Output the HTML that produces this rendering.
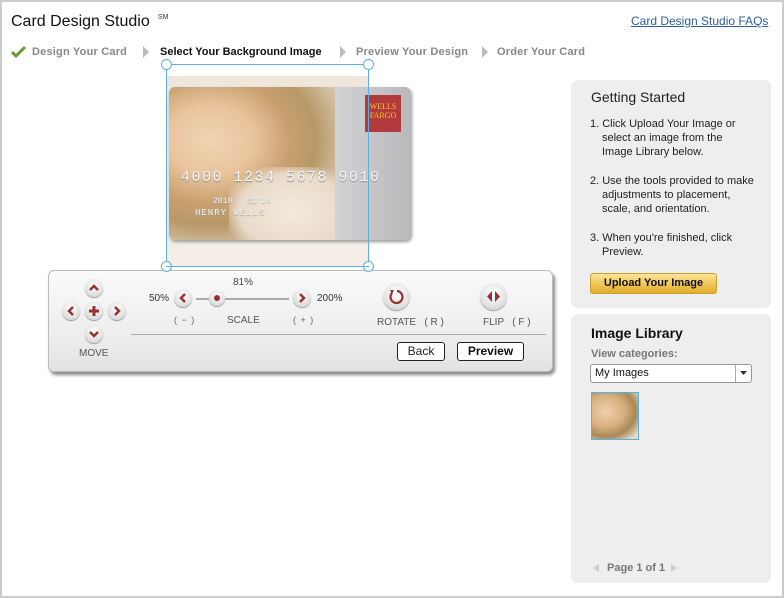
<!DOCTYPE html>
<html><head><style>
*{margin:0;padding:0;box-sizing:border-box}
body{width:784px;height:598px;position:relative;background:#fff;font-family:"Liberation Sans",sans-serif;overflow:hidden}
.frame{position:absolute;left:0;top:0;width:784px;height:598px;border:2px solid #ccc;border-bottom-width:2px}
.a{position:absolute}
.t{position:absolute;white-space:nowrap}
.btn{position:absolute;width:18px;height:18px;border-radius:50%;background:radial-gradient(circle at 50% 35%,#fff,#ddd 70%,#bbb);box-shadow:0 1px 1px #999}
.btn svg{position:absolute;left:0;top:0}
.panel{position:absolute;background:#eee;border-radius:7px}
</style></head><body>
<div class="frame"></div>
<div class="t" style="left:11px;top:13px;font-size:16px;color:#111">Card Design Studio</div>
<div class="t" style="left:158px;top:14px;font-size:7px;color:#333">SM</div>
<div class="t" style="left:631px;top:14px;font-size:12px;color:#2a5fa0;text-decoration:underline">Card Design Studio FAQs</div>
<!-- steps -->
<svg class="a" style="left:11px;top:46px" width="15" height="12"><path d="M1 6 L5 10 L14 1" stroke="#6a9a3a" stroke-width="3" fill="none"/></svg>
<div class="t" style="left:32px;top:46px;font-size:11px;font-weight:bold;color:#888;letter-spacing:0.2px">Design Your Card</div>
<svg class="a" style="left:143px;top:46px" width="6" height="12"><path d="M0 0L6 6L0 12Z" fill="#bbb"/></svg>
<div class="t" style="left:160px;top:46px;font-size:11px;font-weight:bold;color:#111">Select Your Background Image</div>
<svg class="a" style="left:340px;top:46px" width="6" height="12"><path d="M0 0L6 6L0 12Z" fill="#bbb"/></svg>
<div class="t" style="left:356px;top:46px;font-size:11px;font-weight:bold;color:#888;letter-spacing:0.2px">Preview Your Design</div>
<svg class="a" style="left:482px;top:46px" width="6" height="12"><path d="M0 0L6 6L0 12Z" fill="#bbb"/></svg>
<div class="t" style="left:497px;top:46px;font-size:11px;font-weight:bold;color:#888;letter-spacing:0.2px">Order Your Card</div>
<!-- faded image background -->
<div class="a" style="left:167px;top:76px;width:201px;height:190px;background:linear-gradient(180deg,#efe6dc,#f5efe8 60%,#f3ede6)"></div>
<!-- card -->
<div class="a" style="left:169px;top:87px;width:242px;height:153px;border-radius:6px;overflow:hidden;box-shadow:1px 2px 3px #999;background:linear-gradient(90deg,#ddd,#d2d2d4 70%,#b8b8bb)">
 <div class="a" style="left:0;top:0;width:166px;height:153px;background:radial-gradient(ellipse at 25% 35%,#f0d4b4 0%,#e8c49c 25%,#c8a070 45%,#b89868 60%,#d8c8b0 80%,#efe6da 100%)"></div>
 <div class="a" style="left:60px;top:80px;width:106px;height:73px;background:radial-gradient(ellipse at 60% 60%,#f4eadc,#e8dac8 60%,transparent 80%)"></div>
 <div class="a" style="left:196px;top:8px;width:36px;height:37px;background:#b23a3c"></div>
 <div class="t" style="left:198px;top:15px;font-size:8px;font-family:'Liberation Serif',serif;color:#f5c830;line-height:9px;text-align:center;width:32px">WELLS<br>FARGO</div>
 <div class="t" style="left:12px;top:82px;font-size:15px;letter-spacing:1.5px;color:#f6f6f6;font-family:'Liberation Mono',monospace;text-shadow:0 1px 1px #888">4000 1234 5678 9010</div>
 <div class="t" style="left:44px;top:110px;font-size:8px;color:#f2f2f2;font-family:'Liberation Mono',monospace;text-shadow:0 1px 1px #999">2010 &nbsp; 01/14</div>
 <div class="t" style="left:26px;top:121px;font-size:9px;letter-spacing:1px;color:#f2f2f2;font-family:'Liberation Mono',monospace;text-shadow:0 1px 1px #999">HENRY WELLS</div>
</div>
<!-- selection box -->
<div class="a" style="left:166px;top:64px;width:203px;height:203px;border:1px solid #5ab0e8"></div>
<div class="a" style="left:161px;top:59px;width:11px;height:11px;border:1px solid #5ab0e8;border-radius:50%;background:#fff"></div>
<div class="a" style="left:363px;top:59px;width:11px;height:11px;border:1px solid #5ab0e8;border-radius:50%;background:#fff"></div>
<!-- control panel -->
<div class="a" style="left:48px;top:270px;width:505px;height:102px;border:1px solid #bbb;border-radius:6px;background:linear-gradient(180deg,#fafafa,#ececec 70%,#e2e2e2);box-shadow:2px 3px 3px #888"></div>
<div class="a" style="left:161px;top:261px;width:11px;height:11px;border:1px solid #5ab0e8;border-radius:50%;background:#fff"></div>
<div class="a" style="left:363px;top:261px;width:11px;height:11px;border:1px solid #5ab0e8;border-radius:50%;background:#fff"></div>
<div class="a" style="left:166px;top:266px;width:203px;height:1px;background:#5ab0e8"></div>
<!-- move -->
<div class="btn" style="left:85px;top:279px"><svg width="18" height="18"><path d="M5 11L9 7L13 11" stroke="#9a3030" stroke-width="2.5" fill="none"/></svg></div>
<div class="btn" style="left:62px;top:302px"><svg width="18" height="18"><path d="M11 5L7 9L11 13" stroke="#9a3030" stroke-width="2.5" fill="none"/></svg></div>
<div class="btn" style="left:85px;top:302px"><svg width="18" height="18"><path d="M9 4V14M4 9H14" stroke="#9a3030" stroke-width="3"/></svg></div>
<div class="btn" style="left:108px;top:302px"><svg width="18" height="18"><path d="M7 5L11 9L7 13" stroke="#9a3030" stroke-width="2.5" fill="none"/></svg></div>
<div class="btn" style="left:85px;top:325px"><svg width="18" height="18"><path d="M5 7L9 11L13 7" stroke="#9a3030" stroke-width="2.5" fill="none"/></svg></div>
<div class="t" style="left:79px;top:348px;font-size:10px;color:#555">MOVE</div>
<!-- scale -->
<div class="t" style="left:233px;top:277px;font-size:10px;color:#444">81%</div>
<div class="t" style="left:149px;top:293px;font-size:10px;color:#333">50%</div>
<div class="btn" style="left:174px;top:289px"><svg width="18" height="18"><path d="M11 5L7 9L11 13" stroke="#9a3030" stroke-width="2.5" fill="none"/></svg></div>
<div class="a" style="left:196px;top:298px;width:93px;height:2px;background:#aaa"></div>
<div class="btn" style="left:209px;top:290px;width:16px;height:16px"><svg width="16" height="16"><circle cx="8" cy="8" r="3" fill="#9a3030"/></svg></div>
<div class="btn" style="left:293px;top:289px"><svg width="18" height="18"><path d="M7 5L11 9L7 13" stroke="#9a3030" stroke-width="2.5" fill="none"/></svg></div>
<div class="t" style="left:317px;top:293px;font-size:10px;color:#333">200%</div>
<div class="t" style="left:174px;top:315px;font-size:9px;color:#666;letter-spacing:1px">( − )</div>
<div class="t" style="left:227px;top:315px;font-size:10px;color:#555">SCALE</div>
<div class="t" style="left:293px;top:315px;font-size:9px;color:#666;letter-spacing:1px">( + )</div>
<!-- rotate/flip -->
<div class="btn" style="left:383px;top:283px;width:27px;height:27px"><svg width="27" height="27"><path d="M9 10A6 6 0 1 0 14 8" stroke="#9a3030" stroke-width="2.2" fill="none"/><path d="M7 7L11 7L9 11Z" fill="#9a3030"/></svg></div>
<div class="t" style="left:377px;top:317px;font-size:10px;color:#555">ROTATE &nbsp; ( R )</div>
<div class="btn" style="left:480px;top:283px;width:27px;height:27px"><svg width="27" height="27"><path d="M12 8L7 13.5L12 19Z M15 8L20 13.5L15 19Z" fill="#9a3030"/></svg></div>
<div class="t" style="left:483px;top:317px;font-size:10px;color:#555">FLIP &nbsp; ( F )</div>
<div class="a" style="left:131px;top:334px;width:415px;height:1px;background:#aaa"></div>
<div class="a" style="left:397px;top:342px;width:48px;height:19px;border:1px solid #222;border-radius:3px;background:#fff;font-size:12px;text-align:center;line-height:17px;color:#222">Back</div>
<div class="a" style="left:457px;top:342px;width:67px;height:19px;border:1px solid #222;border-radius:3px;background:#fff;font-size:12px;font-weight:bold;text-align:center;line-height:17px;color:#111">Preview</div>
<!-- getting started -->
<div class="panel" style="left:571px;top:80px;width:200px;height:228px"></div>
<div class="t" style="left:591px;top:89px;font-size:14px;color:#222">Getting Started</div>
<div class="a" style="left:590px;top:117px;width:165px;font-size:11px;line-height:14px;color:#222">
<div style="padding-left:12px;text-indent:-12px">1. Click Upload Your Image or select an image from the Image Library below.</div>
<div style="padding-left:12px;text-indent:-12px;margin-top:15px">2. Use the tools provided to make adjustments to placement, scale, and orientation.</div>
<div style="padding-left:12px;text-indent:-12px;margin-top:15px">3. When you're finished, click Preview.</div>
</div>
<div class="a" style="left:590px;top:273px;width:127px;height:21px;border:1px solid #c8a030;border-radius:3px;background:linear-gradient(180deg,#fbe49a,#eec250 60%,#e2ad30);font-size:11px;font-weight:bold;text-align:center;line-height:19px;color:#111">Upload Your Image</div>
<!-- library -->
<div class="panel" style="left:571px;top:314px;width:200px;height:269px"></div>
<div class="t" style="left:591px;top:325px;font-size:14px;font-weight:bold;color:#111">Image Library</div>
<div class="t" style="left:591px;top:348px;font-size:11px;font-weight:bold;color:#777">View categories:</div>
<div class="a" style="left:590px;top:364px;width:162px;height:19px;border:1px solid #999;border-radius:3px;background:#fff"></div>
<div class="a" style="left:735px;top:365px;width:1px;height:17px;background:#aaa"></div>
<div class="t" style="left:595px;top:367px;font-size:11px;color:#111">My Images</div>
<svg class="a" style="left:740px;top:371px" width="7" height="5"><path d="M0 0H7L3.5 4Z" fill="#333"/></svg>
<div class="a" style="left:591px;top:392px;width:48px;height:48px;border:1px solid #5ab0e8;background:radial-gradient(ellipse at 30% 40%,#f0d0b0,#d8b080 40%,#a88858 65%,#e8dcc8 90%)"></div>
<svg class="a" style="left:593px;top:564px" width="6" height="8"><path d="M6 0L0 4L6 8Z" fill="#ccc"/></svg>
<div class="t" style="left:607px;top:562px;font-size:11px;font-weight:bold;color:#777">Page 1 of 1</div>
<svg class="a" style="left:671px;top:564px" width="6" height="8"><path d="M0 0L6 4L0 8Z" fill="#ccc"/></svg>
</body></html>
